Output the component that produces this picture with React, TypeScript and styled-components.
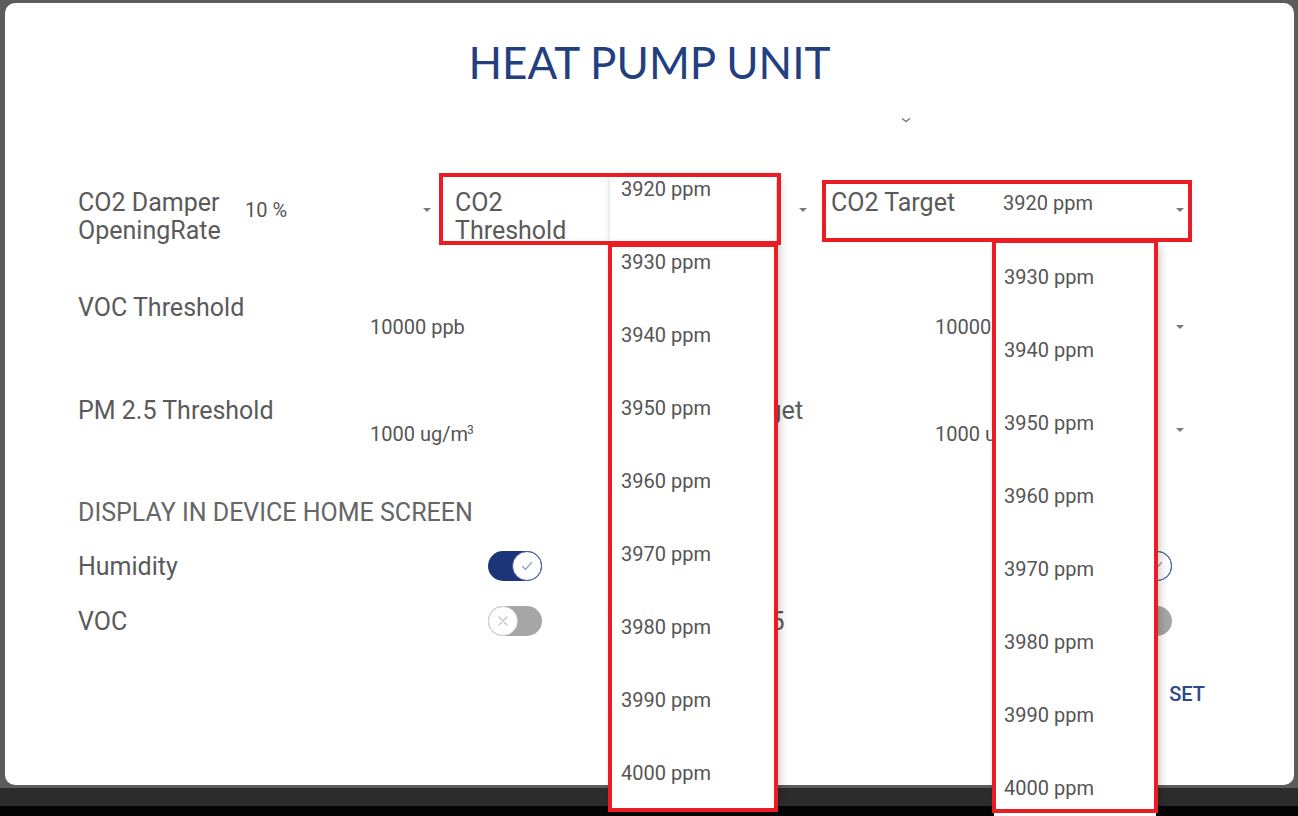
import React from 'react';
import styled, { createGlobalStyle } from 'styled-components';

const GlobalStyle = createGlobalStyle`
  body {
    margin: 0;
    background: #000;
    font-family: Roboto, 'Liberation Sans', sans-serif;
  }
`;

const Screen = styled.div`
  position: relative;
  width: 1298px;
  height: 816px;
  overflow: hidden;
  background: #050505;
  display: flex;
  flex-direction: column;
`;

const Backdrop = styled.div`
  height: 788px;
  box-sizing: border-box;
  padding: 3px 4px 3px 5px;
  background: #5c5c5c;
  display: flex;
`;

const BottomBar = styled.div`
  height: 18px;
  background: #2c2c2c;
`;

const Card = styled.div`
  flex: 1;
  background: #fff;
  border-radius: 10px;
  display: flex;
  flex-direction: column;
`;

const Title = styled.h1`
  margin: 37px 0 0;
  font-family: Lato, 'Open Sans', sans-serif;
  font-weight: 400;
  font-size: 44px;
  line-height: 44px;
  text-align: center;
  color: #233f7f;
`;

const Body = styled.div`
  display: flex;
  flex-direction: column;
  padding: 0 89px 0 73px;
`;

const CaretRow = styled.div`
  display: flex;
  height: 30px;
  margin-top: 21px;
  align-items: center;
  padding-left: 823px;
`;

const FieldGrid = styled.div<{ $cols: string; $gap: number; $top: number }>`
  display: grid;
  grid-template-columns: ${(p) => p.$cols};
  column-gap: ${(p) => p.$gap}px;
  margin-top: ${(p) => p.$top}px;
`;

const Field = styled.div`
  display: flex;
  align-items: flex-start;
`;

const Label = styled.div<{ $width?: number }>`
  width: ${(p) => (p.$width ? `${p.$width}px` : 'auto')};
  flex: none;
  font-size: 25px;
  line-height: 28px;
  color: #5a5a5a;
  white-space: pre-line;
`;

const Value = styled.div<{ $offset: number }>`
  flex: 1;
  margin-top: ${(p) => p.$offset}px;
  font-size: 20px;
  line-height: 28px;
  color: #555;
  white-space: nowrap;
`;

const Sup = styled.span`
  font-size: 12px;
  vertical-align: 7px;
  margin-left: -1px;
`;

const Arrow = styled.span<{ $offset: number }>`
  flex: none;
  width: 0;
  height: 0;
  margin: ${(p) => p.$offset}px 5px 0 0;
  border-left: 4px solid transparent;
  border-right: 4px solid transparent;
  border-top: 4px solid #7a7a7a;
`;

const SectionHeading = styled.div`
  margin-top: 51px;
  font-size: 25px;
  line-height: 28px;
  color: #666;
  text-transform: uppercase;
`;

const ToggleField = styled.div`
  display: flex;
  align-items: center;
  justify-content: space-between;
`;

const ToggleLabel = styled.span`
  font-size: 25px;
  line-height: 28px;
  padding-top: 3px;
  color: #5a5a5a;
`;

const Track = styled.div<{ $on: boolean }>`
  width: 54px;
  height: 30px;
  box-sizing: border-box;
  border-radius: 15px;
  background: ${(p) => (p.$on ? '#1b3578' : '#a6a6a6')};
  display: flex;
  justify-content: ${(p) => (p.$on ? 'flex-end' : 'flex-start')};
`;

const Thumb = styled.div<{ $on: boolean }>`
  width: 30px;
  height: 30px;
  box-sizing: border-box;
  border-radius: 50%;
  background: #fff;
  border: 1.5px solid ${(p) => (p.$on ? '#3d5aa0' : '#d2d2d2')};
  display: flex;
  align-items: center;
  justify-content: center;
`;

const Footer = styled.div`
  display: flex;
  justify-content: flex-end;
  gap: 24px;
  margin-top: 44px;
`;

const TextButton = styled.button`
  border: 0;
  padding: 0;
  background: none;
  font-family: Roboto, 'Liberation Sans', sans-serif;
  font-weight: 500;
  font-size: 20px;
  line-height: 28px;
  color: #2c4a8c;
`;

const Menu = styled.div<{ $left: number; $top: number; $width: number; $height: number; $pad: number; $lead: number }>`
  position: absolute;
  left: ${(p) => p.$left}px;
  top: ${(p) => p.$top}px;
  width: ${(p) => p.$width}px;
  height: ${(p) => p.$height}px;
  overflow: hidden;
  background: #fff;
  box-shadow: 7px 0 10px -5px rgba(0, 0, 0, 0.3), -4px 0 6px -4px rgba(0, 0, 0, 0.2);
  padding-left: ${(p) => p.$pad}px;
  box-sizing: border-box;

  & > div:first-child {
    margin-top: ${(p) => p.$lead}px;
  }
`;

const MenuItem = styled.div`
  height: 73px;
  display: flex;
  align-items: center;
  font-size: 20px;
  color: #555;
`;

const Marker = styled.div<{ $left: number; $top: number; $width: number; $height: number }>`
  position: absolute;
  left: ${(p) => p.$left}px;
  top: ${(p) => p.$top}px;
  width: ${(p) => p.$width}px;
  height: ${(p) => p.$height}px;
  box-sizing: border-box;
  border: 4px solid #ec1c24;
`;

const Check = () => (
  <svg width="16" height="16" viewBox="0 0 16 16">
    <path d="M3.5 8.5l3 3 6-7" fill="none" stroke="#9aa3b5" strokeWidth="1.4" strokeLinecap="round" />
  </svg>
);

const Cross = () => (
  <svg width="14" height="14" viewBox="0 0 14 14">
    <path d="M3 3l8 8M11 3l-8 8" fill="none" stroke="#c4c4c4" strokeWidth="1.3" strokeLinecap="round" />
  </svg>
);

const Switch = ({ on }: { on: boolean }) => (
  <Track $on={on}>
    <Thumb $on={on}>{on ? <Check /> : <Cross />}</Thumb>
  </Track>
);

const ppm = (from: number, to: number) => {
  const list: string[] = [];
  for (let v = from; v <= to; v += 10) list.push(`${v} ppm`);
  return list;
};

export default function App() {
  return (
    <>
      <GlobalStyle />
      <Screen>
        <Backdrop>
          <Card>
            <Title>HEAT PUMP UNIT</Title>
            <Body>
              <CaretRow>
                <svg width="10" height="6" viewBox="0 0 10 6">
                  <path d="M1 1.5l4 3 4-3" fill="none" stroke="#777" strokeWidth="1.4" />
                </svg>
              </CaretRow>

              <FieldGrid $cols="358px 357px 358px" $gap={19} $top={54}>
                <Field>
                  <Label $width={167}>{'CO2 Damper\nOpeningRate'}</Label>
                  <Value $offset={7}>10 %</Value>
                  <Arrow $offset={19} />
                </Field>
                <Field>
                  <Label $width={155}>{'CO2\nThreshold'}</Label>
                  <Value $offset={0}>3920 ppm</Value>
                  <Arrow $offset={19} />
                </Field>
                <Field>
                  <Label $width={172}>CO2 Target</Label>
                  <Value $offset={0}>3920 ppm</Value>
                  <Arrow $offset={19} />
                </Field>
              </FieldGrid>

              <FieldGrid $cols="547px 541px" $gap={23} $top={49}>
                <Field>
                  <Label $width={292}>VOC Threshold</Label>
                  <Value $offset={19}>10000 ppb</Value>
                  <Arrow $offset={31} />
                </Field>
                <Field>
                  <Label $width={287}>VOC Target</Label>
                  <Value $offset={19}>10000 ppb</Value>
                  <Arrow $offset={31} />
                </Field>
              </FieldGrid>

              <FieldGrid $cols="547px 541px" $gap={23} $top={56}>
                <Field>
                  <Label $width={292}>PM 2.5 Threshold</Label>
                  <Value $offset={19}>
                    1000 ug/m<Sup>3</Sup>
                  </Value>
                  <Arrow $offset={31} />
                </Field>
                <Field>
                  <Label $width={287}>PM 2.5 Target</Label>
                  <Value $offset={19}>
                    1000 ug/m<Sup>3</Sup>
                  </Value>
                  <Arrow $offset={31} />
                </Field>
              </FieldGrid>

              <SectionHeading>Display in device home screen</SectionHeading>

              <FieldGrid $cols="464px 466px" $gap={164} $top={23}>
                <ToggleField>
                  <ToggleLabel>Humidity</ToggleLabel>
                  <Switch on />
                </ToggleField>
                <ToggleField>
                  <ToggleLabel>CO2</ToggleLabel>
                  <Switch on />
                </ToggleField>
              </FieldGrid>

              <FieldGrid $cols="464px 466px" $gap={164} $top={24}>
                <ToggleField>
                  <ToggleLabel>VOC</ToggleLabel>
                  <Switch on={false} />
                </ToggleField>
                <ToggleField>
                  <ToggleLabel>PM 2.5</ToggleLabel>
                  <Switch on={false} />
                </ToggleField>
              </FieldGrid>

              <Footer>
                <TextButton>CANCEL</TextButton>
                <TextButton>SET</TextButton>
              </Footer>
            </Body>
          </Card>
        </Backdrop>
        <BottomBar />

        <Menu $left={610} $top={174} $width={166} $height={638} $pad={11} $lead={-22}>
          {ppm(3920, 4000).map((v) => (
            <MenuItem key={v}>{v}</MenuItem>
          ))}
        </Menu>
        <Menu $left={994} $top={240} $width={162} $height={576} $pad={10} $lead={0}>
          {ppm(3930, 4000).map((v) => (
            <MenuItem key={v}>{v}</MenuItem>
          ))}
        </Menu>

        <Marker $left={439} $top={173} $width={342} $height={72} />
        <Marker $left={608} $top={243} $width={170} $height={569} />
        <Marker $left={822} $top={180} $width={370} $height={62} />
        <Marker $left={992} $top={239} $width={166} $height={574} />
      </Screen>
    </>
  );
}
